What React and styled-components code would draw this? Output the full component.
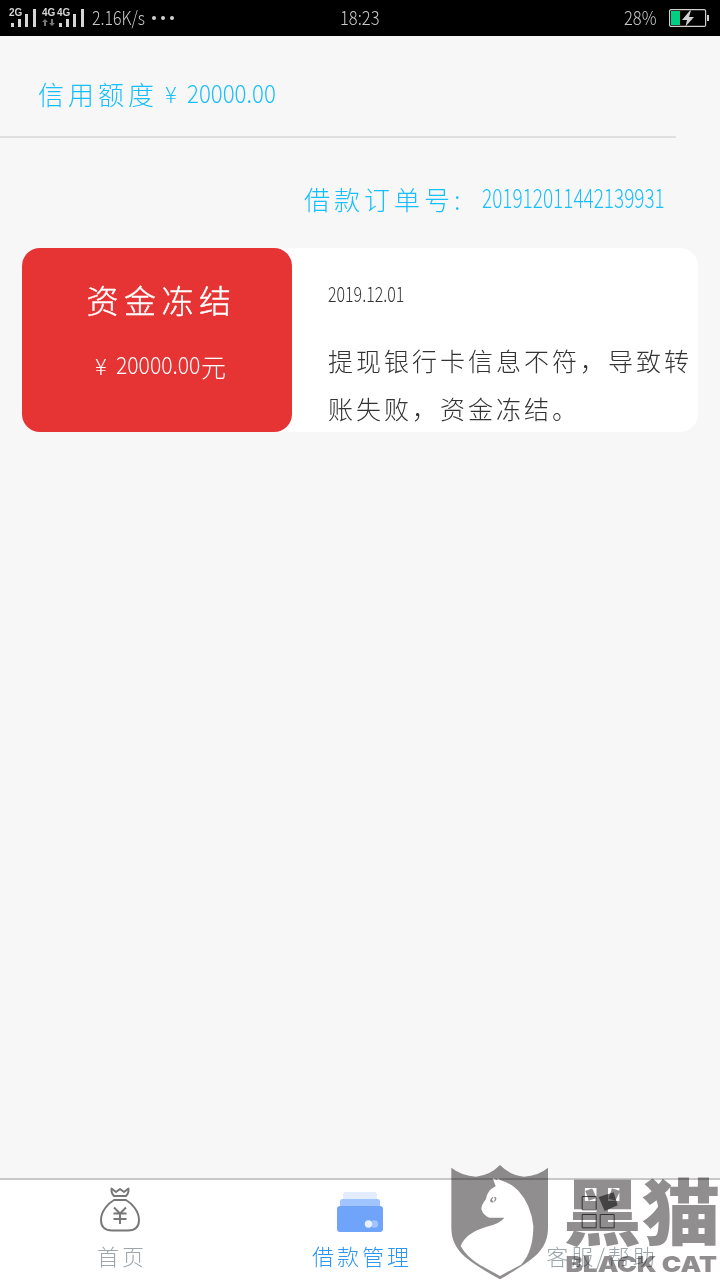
import React from 'react';
import styled, { createGlobalStyle } from 'styled-components';

const GlobalStyle = createGlobalStyle`
  * {
    box-sizing: border-box;
  }
  body {
    margin: 0;
    background-color: #f7f7f7;
    font-family: "Noto Sans CJK SC", "Liberation Sans", sans-serif;
    font-weight: 300;
  }
`;

const Page = styled.div`
  position: relative;
  display: flex;
  flex-direction: column;
  width: 720px;
  height: 1280px;
  overflow: hidden;
  background-color: #f7f7f7;
`;

const StatusBar = styled.div`
  display: flex;
  justify-content: space-between;
  height: 36px;
  background-color: #000;
  color: #c9c9c9;
`;

const StatusGroup = styled.div`
  display: flex;
  align-items: center;
  width: ${props => props.$width}px;
  justify-content: ${props => props.$align || "flex-start"};
`;

// narrow figures: the box keeps its own width, the glyphs are squeezed into it
const Figures = styled.span`
  display: inline-block;
  width: ${props => props.$width}px;
  padding-bottom: 4px;
  font-size: ${props => props.$size}px;
  line-height: 1;
  white-space: nowrap;
  transform: scaleX(${props => props.$squeeze});
  transform-origin: 0 50%;
`;

const Dots = styled.span`
  display: flex;
  gap: 5px;
  margin-left: 6px;
  i {
    width: 4px;
    height: 4px;
    border-radius: 50%;
    background-color: #d0d0d0;
  }
`;

const Credit = styled.div`
  display: flex;
  align-items: center;
  width: 676px;
  height: 102px;
  padding: 16px 0 0 38px;
  border-bottom: 2px solid #e0e0e0;
  color: #18bfff;
`;

const Label = styled.span`
  font-size: 26px;
  line-height: 36px;
  letter-spacing: 4px;
  white-space: nowrap;
`;

const Yen = styled.span`
  width: ${props => props.$width}px;
  margin-left: ${props => props.$indent || 0}px;
  padding-bottom: 2px;
  font-size: 22px;
  line-height: 1;
`;

const Order = styled.div`
  display: flex;
  align-items: center;
  justify-content: flex-end;
  height: 110px;
  padding: 12px 54px 0 0;
  color: #18bfff;
`;

const Colon = styled.span`
  width: 28px;
  font-size: 26px;
  line-height: 36px;
`;

const Card = styled.div`
  display: flex;
  height: 184px;
  margin: 0 22px;
  border-radius: 18px;
  background-color: #fff;
`;

const Frozen = styled.div`
  display: flex;
  flex-direction: column;
  align-items: center;
  width: 270px;
  padding-top: 27px;
  border-radius: 18px;
  background-color: #e63333;
  color: #fff;
`;

const FrozenTitle = styled.div`
  padding-left: 9px;
  font-size: 32px;
  line-height: 48px;
  letter-spacing: 5.5px;
  -webkit-text-stroke: 0.4px #fff;
`;

const Amount = styled.div`
  display: flex;
  align-items: center;
  height: 40px;
  margin-top: 23px;
  padding-left: 7px;
`;

const Unit = styled.span`
  font-size: 25px;
  line-height: 1;
`;

const Detail = styled.div`
  flex: 1;
  padding: 35px 0 0 36px;
  color: #333;
`;

const DateLine = styled.div`
  display: flex;
  height: 24px;
  align-items: center;
`;

const Reason = styled.p`
  margin: 29px 0 0;
  font-size: 25px;
  line-height: 48px;
  letter-spacing: 3px;
  white-space: nowrap;
`;

const TabBar = styled.nav`
  display: flex;
  height: 102px;
  margin-top: auto;
  border-top: 2px solid #c8c8c8;
  background-color: #fff;
`;

const Tab = styled.div`
  flex: 1;
  display: flex;
  flex-direction: column;
  align-items: center;
  padding-top: 8px;
  color: ${props => props.$active ? "#2c96f5" : "#9ca6ab"};
  span {
    margin-top: 8px;
    padding-left: 4px;
    font-size: 22px;
    line-height: 30px;
    letter-spacing: 3px;
    white-space: nowrap;
  }
`;

const TabIcon = styled.div`
  display: flex;
  align-items: ${props => props.$align || "flex-end"};
  height: 44px;
  svg {
    display: block;
  }
`;

const Watermark = styled.div`
  position: absolute;
  left: 440px;
  top: 1155px;
  display: flex;
  width: 280px;
  height: 125px;
  color: #918e90;
  mix-blend-mode: multiply;
  pointer-events: none;
`;

const Brand = styled.div`
  width: 150px;
  padding-top: 15px;
  margin-left: -7px;
  white-space: nowrap;
`;

const BrandName = styled.div`
  font-size: 76px;
  font-weight: 900;
  line-height: 76px;
  transform: scale(1.035, 0.94);
  transform-origin: 0 50%;
`;

const BrandLatin = styled.div`
  margin-top: 6px;
  padding-left: 2px;
  font-family: Inter, "Liberation Sans", sans-serif;
  font-size: 22px;
  font-weight: 900;
  line-height: 24px;
  transform: scaleX(1.19);
  transform-origin: 0 50%;
`;

const Signal = () => (
  <svg width="92" height="36" viewBox="0 0 92 36" fill="#d6d6d6">
    <g fontFamily="Liberation Sans" fontSize="10" fontWeight="700">
      <text x="9" y="16">2G</text>
      <text x="42" y="16">4G</text>
      <text x="57" y="16">4G</text>
    </g>
    <path d="M11 23h3v4h-3zM18 19h3v8h-3zM25 14h3v13h-3zM33 9h3v18h-3z" />
    <path d="M59 23h3v4h-3zM66 19h3v8h-3zM73 14h3v13h-3zM81 9h3v18h-3z" />
    <path d="M45 19l3 3h-2v4h-2v-4h-2zM52 26l-3-3h2v-4h2v4h2z" fill="#777" />
  </svg>
);

const Battery = () => (
  <svg width="41" height="20" viewBox="0 0 41 20">
    <rect x="1.6" y="1.6" width="36" height="16.8" rx="1.5" fill="none" stroke="#d0d0d0" strokeWidth="1.2" />
    <rect x="3" y="3" width="9" height="14" fill="#00d084" />
    <path d="M22 2.5L14 12h5l-1.5 6.5L26 9h-5l2-6.5z" fill="#d0d0d0" />
    <rect x="39" y="7" width="2" height="6" fill="#d0d0d0" />
  </svg>
);

const MoneyBag = () => (
  <svg width="42" height="46" viewBox="0 0 42 46" fill="none" stroke="#777" strokeWidth="1.9" strokeLinejoin="round" strokeLinecap="round">
    <path d="M15 10q-3-3-2.5-7.5l4.500 3.5 4-3 4 3 4.5-3.5Q30 7 27 10z" />
    <path d="M15 14h12c6 3.5 13 11 13 20 0 7-4 10.5-11 10.5H13c-7 0-11-3.5-11-10.5 0-9 7-16.5 13-20z" />
    <path d="M15 21.5l6 6 6-6M14.5 27.5h13M14.5 33h13M21 27.5V38" strokeLinecap="butt" />
  </svg>
);

const Wallet = () => (
  <svg width="46" height="40" viewBox="0 0 46 40">
    <rect x="6" width="34" height="16" rx="2.5" fill="#e2eeff" />
    <rect x="3" y="7" width="40" height="16" rx="2.5" fill="#a0c4ff" />
    <rect y="14" width="46" height="26" rx="3" fill="#70a4fb" />
    <circle cx="37.5" cy="32" r="3.7" fill="#a0c4ff" />
    <circle cx="31.5" cy="32" r="3.7" fill="#e8f1ff" />
  </svg>
);

const Squares = () => (
  <svg width="38" height="38" viewBox="94 90 114 114" fill="none" stroke="#555" strokeWidth="3">
    <path d="M97.5 106.5h42v40h-42zM97.5 160.5h42v40h-42zM151.5 160.5h42v40h-42z" />
    <path d="M147 108l45-14 12 39-39 17z" fill="#777" stroke="none" />
  </svg>
);

const CatShield = () => (
  <svg width="130" height="125" viewBox="0 0 390 375" fill="currentColor">
    <path
      fillRule="evenodd"
      d="M34 38Q64 62 108 65Q150 61 180 30Q210 61 252 65Q296 62 324 38V222C323 262 305 290 270 316Q240 338 180 373Q120 340 88 316C52 289 35 260 34 222Z
        M158 69L167 94Q141 106 138 132Q124 150 124 162Q129 181 148 188H193Q182 205 140 215Q76 234 62 273Q78 304 120 330L180 363L243 329Q280 290 280 213Q273 148 235 107Q212 84 182 76L172 69L173 76Z"
    />
    <path d="M150 138Q152 127 161 125L156 134L160 142Q153 144 150 138zM162 125Q171 126 169 133Q167 140 160 142L165 133z" />
  </svg>
);

const App = () => {
  return (
    <Page>
      <GlobalStyle />
      <StatusBar>
        <StatusGroup $width={260}>
          <Signal />
          <Figures $width={54} $size={19} $squeeze={0.84}>2.16K/s</Figures>
          <Dots><i /><i /><i /></Dots>
        </StatusGroup>
        <StatusGroup $width={200} $align="center">
          <Figures $width={40} $size={19} $squeeze={0.87}>18:23</Figures>
        </StatusGroup>
        <StatusGroup $width={249} $align="flex-end">
          <Figures $width={44} $size={19} $squeeze={0.87}>28%</Figures>
          <Battery />
        </StatusGroup>
        <StatusGroup $width={11} />
      </StatusBar>

      <Credit>
        <Label>信用额度</Label>
        <Yen $width={22} $indent={7}>¥</Yen>
        <Figures $width={90} $size={25} $squeeze={0.89}>20000.00</Figures>
      </Credit>

      <Order>
        <Label>借款订单号</Label>
        <Colon>:</Colon>
        <Figures $width={184} $size={26} $squeeze={0.73}>201912011442139931</Figures>
      </Order>

      <Card>
        <Frozen>
          <FrozenTitle>资金冻结</FrozenTitle>
          <Amount>
            <Yen $width={21}>¥</Yen>
            <Figures $width={85} $size={24} $squeeze={0.88}>20000.00</Figures>
            <Unit>元</Unit>
          </Amount>
        </Frozen>
        <Detail>
          <DateLine>
            <Figures $width={76} $size={21} $squeeze={0.76}>2019.12.01</Figures>
          </DateLine>
          <Reason>
            提现银行卡信息不符，导致转
            <br />
            账失败，资金冻结。
          </Reason>
        </Detail>
      </Card>

      <TabBar>
        <Tab>
          <TabIcon><MoneyBag /></TabIcon>
          <span>首页</span>
        </Tab>
        <Tab $active>
          <TabIcon><Wallet /></TabIcon>
          <span>借款管理</span>
        </Tab>
        <Tab>
          <TabIcon $align="center"><Squares /></TabIcon>
          <span>客服/帮助</span>
        </Tab>
      </TabBar>

      <Watermark>
        <CatShield />
        <Brand>
          <BrandName>黑猫</BrandName>
          <BrandLatin>BLACK CAT</BrandLatin>
        </Brand>
      </Watermark>
    </Page>
  )
}

export default App
